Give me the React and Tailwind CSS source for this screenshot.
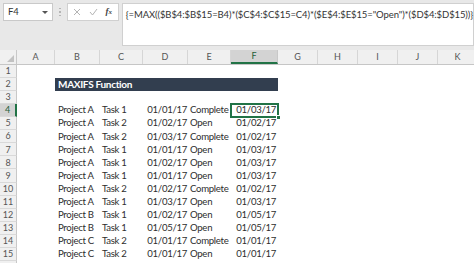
import React from "react";

const COLS = ["A", "B", "C", "D", "E", "F", "G", "H", "I", "J", "K"];
const wcls = ["w-[17px]", "w-[38px]", "w-[45px]", "w-[43px]", "w-[45px]", "w-[43px]", "w-[47px]", "w-[40px]", "w-[40px]", "w-[40px]", "w-[40px]", "w-[40px]"];

const data = [
  ["Project A", "Task 1", "01/01/17", "Complete", "01/03/17"],
  ["Project A", "Task 2", "01/02/17", "Open", "01/02/17"],
  ["Project A", "Task 2", "01/03/17", "Complete", "01/02/17"],
  ["Project A", "Task 1", "01/01/17", "Open", "01/03/17"],
  ["Project A", "Task 1", "01/02/17", "Open", "01/03/17"],
  ["Project A", "Task 1", "01/01/17", "Open", "01/03/17"],
  ["Project A", "Task 2", "01/02/17", "Complete", "01/02/17"],
  ["Project A", "Task 1", "01/03/17", "Open", "01/03/17"],
  ["Project B", "Task 1", "01/02/17", "Open", "01/05/17"],
  ["Project B", "Task 1", "01/05/17", "Open", "01/05/17"],
  ["Project C", "Task 2", "01/01/17", "Complete", "01/01/17"],
  ["Project C", "Task 2", "01/01/17", "Open", "01/01/17"],
];

function RowHeader({ n, selected }) {
  return (
    <div
      className={
        "w-[17px] shrink-0 h-full flex items-center justify-center text-[9px] tracking-normal border-b border-[#d9d9d9] " +
        (selected
          ? "bg-[#d3d3d3] text-[#1e5e3a] border-r-2 border-r-[#217346]"
          : "bg-[#f0f0f0] text-[#555] border-r border-r-[#c8c8c8]")
      }
    >
      {n}
    </div>
  );
}

function EmptyCells({ from }) {
  return (
    <>
      {wcls.slice(from).map((c, i) => (
        <div key={i} className={c + " shrink-0 h-full"} />
      ))}
    </>
  );
}

export default function App() {
  const font = { fontFamily: "Lato, 'Liberation Sans', sans-serif" };
  return (
    <div className="w-[474px] h-[263px] overflow-hidden bg-white text-[#2e2e2e]" style={font}>
      {/* toolbar */}
      <div className="h-[50px] bg-[#e8e8e8] flex items-start pt-[3px] pl-[3px]">
        <div className="w-[64px] h-[18px] bg-white border border-[#c9c9c9] flex items-center justify-between pl-[4px] pr-[4px] text-[9.5px] text-[#333]">
          <span>F4</span>
          <span className="w-0 h-0 border-l-[3px] border-r-[3px] border-t-[3px] border-l-transparent border-r-transparent border-t-[#555]" />
        </div>
        <div className="w-[18px] h-[18px] flex flex-col items-center justify-center gap-[2px]">
          <span className="w-[1.5px] h-[1.5px] bg-[#b5b5b5]" />
          <span className="w-[1.5px] h-[1.5px] bg-[#b5b5b5]" />
          <span className="w-[1.5px] h-[1.5px] bg-[#b5b5b5]" />
        </div>
        <div className="w-[68px] h-[18px] bg-white border border-[#d0d0d0] flex items-center justify-around px-[2px]">
          <svg width="8" height="8" viewBox="0 0 8 8"><path d="M1 1 L7 7 M7 1 L1 7" stroke="#b4b4b4" strokeWidth="1" fill="none" /></svg>
          <svg width="9" height="8" viewBox="0 0 9 8"><path d="M1 4 L3.5 7 L8 1" stroke="#b4b4b4" strokeWidth="1" fill="none" /></svg>
          <span className="text-[9px] italic text-[#444] font-semibold" style={{ fontFamily: "'Liberation Serif', serif" }}>
            f<span className="text-[7px]">x</span>
          </span>
        </div>
        <div className="ml-[3px] flex-1 h-[43px] bg-white border border-[#d0d0d0] pl-[3px] pt-[4px] text-[9.5px] text-[#333] whitespace-nowrap tracking-[-0.1px]">
          {'{=MAX(($B$4:$B$15=B4)*($C$4:$C$15=C4)*($E$4:$E$15="Open")*($D$4:$D$15))}'}
        </div>
      </div>

      {/* column headers */}
      <div className="h-[15px] flex bg-[#f0f0f0] border-b border-[#c6c6c6]">
        <div className="w-[17px] shrink-0 h-full relative border-r border-[#c8c8c8]">
          <div className="absolute right-[2px] bottom-[2px] w-0 h-0 border-b-[7px] border-l-[7px] border-b-[#c2c2c2] border-l-transparent" />
        </div>
        {COLS.map((c, i) => (
          <div
            key={c}
            className={
              wcls[i + 1] +
              " shrink-0 h-full flex items-center justify-center text-[9px] " +
              (c === "F"
                ? "bg-[#d3d3d3] text-[#1e5e3a] border-b-2 border-b-[#217346] border-r border-r-[#c8c8c8]"
                : "text-[#555] border-r border-r-[#d6d6d6]")
            }
          >
            {c}
          </div>
        ))}
      </div>

      {/* row 1 */}
      <div className="h-[13px] flex">
        <RowHeader n={1} />
        <EmptyCells from={1} />
      </div>
      {/* row 2 title */}
      <div className="h-[13px] flex">
        <RowHeader n={2} />
        <div className="w-[38px] shrink-0" />
        <div className="w-[223px] shrink-0 h-full bg-[#323e4f] text-white font-bold text-[10px] flex items-center pl-[3px] tracking-[-0.3px]">
          MAXIFS Function
        </div>
      </div>
      {/* row 3 */}
      <div className="h-[13px] flex">
        <RowHeader n={3} />
      </div>
      {data.map((r, i) => {
        const n = i + 4;
        const sel = n === 4;
        return (
          <div key={n} className="h-[13.1px] flex text-[9.6px] tracking-[-0.3px]">
            <RowHeader n={n} selected={sel} />
            <div className="w-[38px] shrink-0" />
            <div className="w-[45px] shrink-0 h-full flex items-center pl-[3px] whitespace-nowrap">{r[0]}</div>
            <div className="w-[43px] shrink-0 h-full flex items-center pl-[2px] whitespace-nowrap">{r[1]}</div>
            <div className="w-[45px] shrink-0 h-full flex items-center justify-end pr-[1px] whitespace-nowrap">{r[2]}</div>
            <div className="w-[43px] shrink-0 h-full flex items-center pl-[2px] whitespace-nowrap">{r[3]}</div>
            <div
              className={
                "w-[47px] shrink-0 h-full flex items-center justify-end pr-[2px] whitespace-nowrap relative " +
                (sel ? "outline-2 outline-[#217346] -outline-offset-1" : "")
              }
            >
              {r[4]}
              {sel && (
                <span className="absolute right-[-3px] bottom-[-3px] w-[5px] h-[5px] bg-[#217346] border border-white" />
              )}
            </div>
          </div>
        );
      })}
      <div className="h-[13px] flex">
        <div className="w-[17px] shrink-0 h-full bg-[#f0f0f0] border-r border-[#c8c8c8]" />
      </div>
    </div>
  );
}
